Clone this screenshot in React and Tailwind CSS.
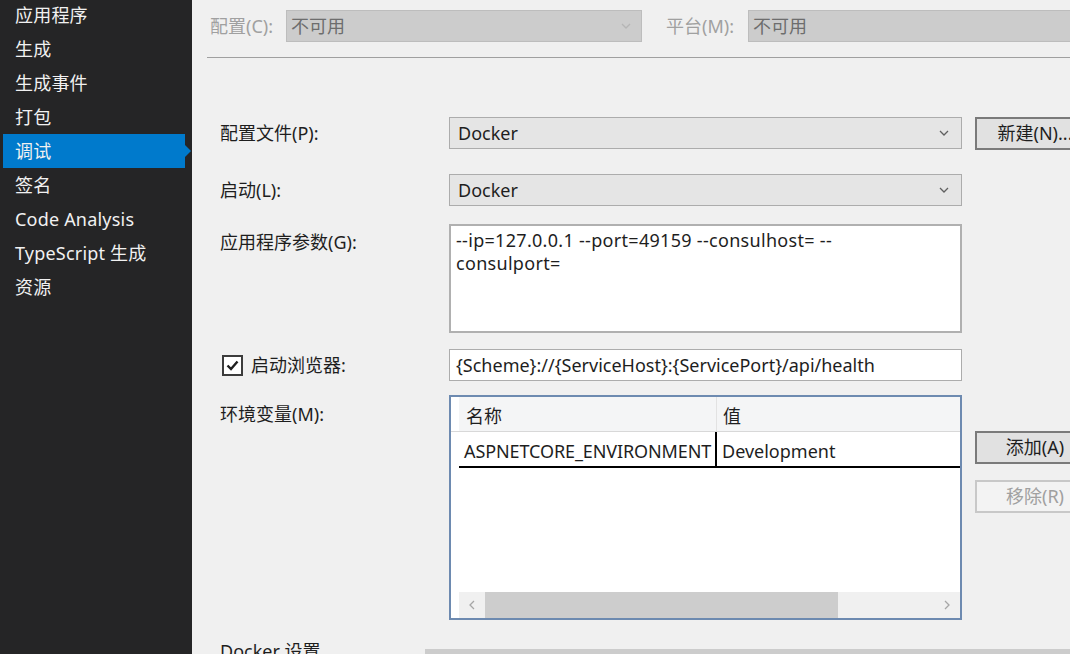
import React from "react";

const FONT = { fontFamily: '"Noto Sans", "Noto Sans CJK SC", sans-serif' };

function Chevron({ color = "#606060" }) {
  return (
    <svg width="10" height="6" viewBox="0 0 10 6" className="shrink-0">
      <polyline points="1,1 5,5 9,1" fill="none" stroke={color} strokeWidth="1.3" />
    </svg>
  );
}

const sideItems = [
  "应用程序",
  "生成",
  "生成事件",
  "打包",
  "调试",
  "签名",
  "Code Analysis",
  "TypeScript 生成",
  "资源",
];

function Sidebar() {
  return (
    <div className="w-[192px] shrink-0 bg-[#252526] h-full">
      <div className="mt-[-2px] flex flex-col">
        {sideItems.map((t) => {
          const sel = t === "调试";
          return (
            <div key={t} className="relative h-[34px] shrink-0 flex items-center">
              <div
                className={
                  "ml-[3px] w-[182px] h-[34px] flex items-center pl-[12px] text-[18px] tracking-[0.2px] text-[#f1f1f1] whitespace-nowrap " +
                  (sel ? "bg-[#007acc]" : "")
                }
              >
                {t}
              </div>
              {sel && (
                <div className="absolute left-[185px] top-[11px] w-0 h-0 border-t-[6px] border-b-[6px] border-l-[6px] border-t-transparent border-b-transparent border-l-[#007acc]" />
              )}
            </div>
          );
        })}
      </div>
    </div>
  );
}

function Select({ value }) {
  return (
    <div className="w-[513px] shrink-0 h-[32px] bg-[#e5e5e5] border border-[#acacac] flex items-center justify-between pl-[8px] pr-[12px]">
      <span>{value}</span>
      <Chevron />
    </div>
  );
}

function Btn({ children, disabled }) {
  return (
    <div
      className={
        "w-[120px] h-[33px] shrink-0 flex items-center justify-center border-2 " +
        (disabled
          ? "border-[#c8c8c8] bg-[#f3f3f3] text-[#a0a0a0]"
          : "border-[#7a7a7a] bg-[#e1e1e1] text-[#1e1e1e]")
      }
    >
      {children}
    </div>
  );
}

function Label({ children, className = "" }) {
  return <div className={"w-[229px] shrink-0 " + className}>{children}</div>;
}

function Table() {
  return (
    <div className="w-[513px] h-[225px] shrink-0 border-2 border-[#6d8ab0] bg-white flex flex-col">
      <div className="flex h-[35px] shrink-0 bg-[#f4f5f6] border-b border-[#d8d8d8]">
        <div className="w-[8px] shrink-0 bg-white" />
        <div className="w-[258px] shrink-0 border-r border-[#e2e2e2] flex items-center pl-[7px] pt-[5px]">名称</div>
        <div className="flex-1 flex items-center pl-[6px] pt-[5px]">值</div>
      </div>
      <div className="flex h-[36px] shrink-0">
        <div className="w-[8px] shrink-0 bg-white" />
        <div className="flex-1 flex border-b-2 border-black">
          <div className="w-[258px] shrink-0 border-r-2 border-black flex items-center pl-[5px] pt-[5px] whitespace-nowrap overflow-hidden tracking-[-0.1px]">
            ASPNETCORE_ENVIRONMENT
          </div>
          <div className="flex-1 flex items-center pl-[5px] pt-[5px]">Development</div>
        </div>
      </div>
      <div className="flex-1" />
      <div className="flex h-[26px] shrink-0 ml-[8px] bg-[#f0f0f0]">
        <div className="w-[26px] shrink-0 flex items-center justify-center">
          <svg width="6" height="10" viewBox="0 0 6 10">
            <polyline points="5,1 1,5 5,9" fill="none" stroke="#a6a6a6" strokeWidth="1.3" />
          </svg>
        </div>
        <div className="w-[353px] shrink-0 bg-[#cdcdcd]" />
        <div className="flex-1" />
        <div className="w-[26px] shrink-0 flex items-center justify-center">
          <svg width="6" height="10" viewBox="0 0 6 10">
            <polyline points="1,1 5,5 1,9" fill="none" stroke="#a6a6a6" strokeWidth="1.3" />
          </svg>
        </div>
      </div>
    </div>
  );
}

export default function App() {
  return (
    <div className="w-[1070px] h-[654px] overflow-hidden flex text-[18px] text-[#1e1e1e]" style={FONT}>
      <Sidebar />
      <div className="flex-1 bg-[#f0f0f0] flex flex-col min-w-0 overflow-hidden">
        {/* Top config row */}
        <div className="flex shrink-0 items-center mt-[10px] pl-[18px] h-[32px] whitespace-nowrap">
          <div className="w-[76px] shrink-0 text-[#a0a0a0]">配置(C):</div>
          <div className="w-[356px] shrink-0 h-[32px] bg-[#cccccc] border border-[#bdbdbd] flex items-center justify-between pl-[4px] pr-[10px] text-[#6d6d6d]">
            <span>不可用</span>
            <Chevron color="#b5b5b5" />
          </div>
          <div className="ml-[24px] w-[82px] shrink-0 text-[#a0a0a0]">平台(M):</div>
          <div className="w-[340px] shrink-0 h-[32px] bg-[#cccccc] border border-[#bdbdbd] flex items-center pl-[4px] text-[#6d6d6d]">
            不可用
          </div>
        </div>
        <div className="shrink-0 mt-[15px] ml-[15px] h-px bg-[#a0a0a0]" />

        {/* Form */}
        <div className="shrink-0 pl-[28px] mt-[59px] flex flex-col whitespace-nowrap">
          <div className="flex shrink-0 items-center h-[32px]">
            <Label>配置文件(P):</Label>
            <Select value="Docker" />
            <div className="ml-[13px] shrink-0">
              <Btn>新建(N)...</Btn>
            </div>
          </div>

          <div className="flex shrink-0 items-center h-[32px] mt-[25px]">
            <Label>启动(L):</Label>
            <Select value="Docker" />
          </div>

          <div className="flex shrink-0 mt-[18px]">
            <Label className="pt-[5px]">应用程序参数(G):</Label>
            <div className="w-[513px] shrink-0 h-[109px] bg-white border-2 border-[#b0b0b0] px-[5px] pt-[3px] leading-[23px] whitespace-normal tracking-[0.3px]">
              --ip=127.0.0.1 --port=49159 --consulhost= --
              <br />
              consulport=
            </div>
          </div>

          <div className="flex shrink-0 items-center h-[32px] mt-[16px]">
            <Label className="flex items-center">
              <div className="ml-[2px] w-[21px] h-[21px] shrink-0 border-2 border-[#3c3c3c] bg-white flex items-center justify-center">
                <svg width="13" height="11" viewBox="0 0 13 11">
                  <polyline points="1.5,5.5 5,9 11.5,1.5" fill="none" stroke="#1e1e1e" strokeWidth="2.4" />
                </svg>
              </div>
              <span className="ml-[8px]">启动浏览器:</span>
            </Label>
            <div className="w-[513px] shrink-0 h-[32px] bg-white border border-[#acacac] flex items-center pl-[6px]">
              {"{Scheme}://{ServiceHost}:{ServicePort}/api/health"}
            </div>
          </div>

          <div className="flex shrink-0 mt-[14px]">
            <Label className="pt-[6px]">环境变量(M):</Label>
            <Table />
            <div className="ml-[13px] shrink-0 flex flex-col pt-[36px] gap-[16px]">
              <Btn>添加(A)</Btn>
              <Btn disabled>移除(R)</Btn>
            </div>
          </div>

          <div className="flex shrink-0 items-start mt-[18px] h-[40px]">
            <span className="shrink-0">Docker 设置</span>
            <div className="ml-[104px] mt-[11px] flex-1 h-[10px] bg-[#cccccc]" />
          </div>
        </div>
      </div>
    </div>
  );
}
